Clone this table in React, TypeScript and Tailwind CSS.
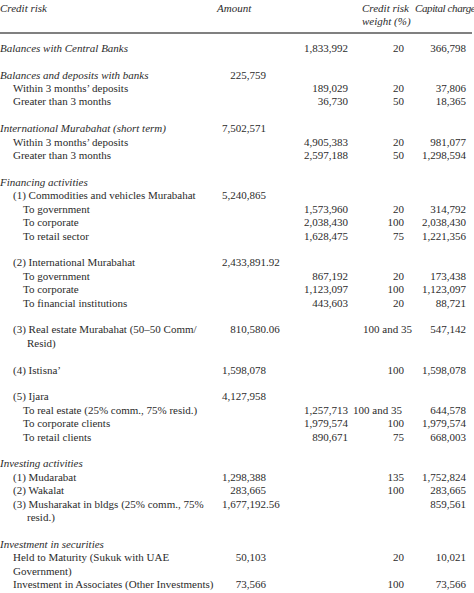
import React from "react";

type Line = {
  label?: string;
  indent?: 0 | 1 | 2 | 3;
  italic?: boolean;
  amount?: string;
  sub?: string;
  weight?: string;
  weightShift?: "right" | "none";
  capital?: string;
} | null;

const lines: Line[] = [
  { label: "Balances with Central Banks", italic: true, sub: "1,833,992", weight: "20", capital: "366,798" },
  null,
  { label: "Balances and deposits with banks", italic: true, amount: "225,759" },
  { label: "Within 3 months\u2019 deposits", indent: 1, sub: "189,029", weight: "20", capital: "37,806" },
  { label: "Greater than 3 months", indent: 1, sub: "36,730", weight: "50", capital: "18,365" },
  null,
  { label: "International Murabahat (short term)", italic: true, amount: "7,502,571" },
  { label: "Within 3 months\u2019 deposits", indent: 1, sub: "4,905,383", weight: "20", capital: "981,077" },
  { label: "Greater than 3 months", indent: 1, sub: "2,597,188", weight: "50", capital: "1,298,594" },
  null,
  { label: "Financing activities", italic: true },
  { label: "(1) Commodities and vehicles Murabahat", indent: 1, amount: "5,240,865" },
  { label: "To government", indent: 2, sub: "1,573,960", weight: "20", capital: "314,792" },
  { label: "To corporate", indent: 2, sub: "2,038,430", weight: "100", capital: "2,038,430" },
  { label: "To retail sector", indent: 2, sub: "1,628,475", weight: "75", capital: "1,221,356" },
  null,
  { label: "(2) International Murabahat", indent: 1, amount: "2,433,891.92" },
  { label: "To government", indent: 2, sub: "867,192", weight: "20", capital: "173,438" },
  { label: "To corporate", indent: 2, sub: "1,123,097", weight: "100", capital: "1,123,097" },
  { label: "To financial institutions", indent: 2, sub: "443,603", weight: "20", capital: "88,721" },
  null,
  { label: "(3) Real estate Murabahat (50\u201350 Comm/", indent: 1, amount: "810,580.06", weight: "100 and 35", weightShift: "right", capital: "547,142" },
  { label: "Resid)", indent: 3 },
  null,
  { label: "(4) Istisna\u2019", indent: 1, amount: "1,598,078", weight: "100", capital: "1,598,078" },
  null,
  { label: "(5) Ijara", indent: 1, amount: "4,127,958" },
  { label: "To real estate (25% comm., 75% resid.)", indent: 2, sub: "1,257,713", weight: "100 and 35", capital: "644,578" },
  { label: "To corporate clients", indent: 2, sub: "1,979,574", weight: "100", capital: "1,979,574" },
  { label: "To retail clients", indent: 2, sub: "890,671", weight: "75", capital: "668,003" },
  null,
  { label: "Investing activities", italic: true },
  { label: "(1) Mudarabat", indent: 1, amount: "1,298,388", weight: "135", capital: "1,752,824" },
  { label: "(2) Wakalat", indent: 1, amount: "283,665", weight: "100", capital: "283,665" },
  { label: "(3) Musharakat in bldgs (25% comm., 75%", indent: 1, amount: "1,677,192.56", capital: "859,561" },
  { label: "resid.)", indent: 3 },
  null,
  { label: "Investment in securities", italic: true },
  { label: "Held to Maturity (Sukuk with UAE", indent: 1, amount: "50,103", weight: "20", capital: "10,021" },
  { label: "Government)", indent: 1 },
  { label: "Investment in Associates (Other Investments)", indent: 1, amount: "73,566", weight: "100", capital: "73,566" },
];

const indentClass = ["pl-0", "pl-[13px]", "pl-[23px]", "pl-[27px]"];

function Amount({ value }: { value?: string }) {
  if (!value) return <div />;
  const [whole, dec] = value.split(".");
  return (
    <div className="flex whitespace-nowrap">
      <span className="w-[48px] text-right">{whole}</span>
      {dec && <span>.{dec}</span>}
    </div>
  );
}

export default function App() {
  return (
    <div className="h-[593px] w-[474px] overflow-hidden bg-white font-['Liberation_Serif',serif] text-[11px] leading-[13.42px] text-[#2b2b2b]">
      <div className="grid grid-cols-[218px_72px_58px_56px_70px] pt-[2px] italic">
        <div>Credit risk</div>
        <div className="-ml-[1px]">Amount</div>
        <div />
        <div className="-mr-4 pl-[14px] whitespace-nowrap">
          Credit risk
          <br />
          weight (%)
        </div>
        <div className="pl-[11px] whitespace-nowrap tracking-[-0.4px]">Capital charge</div>
      </div>
      <div className="mt-[3px] h-[2px] w-[472px] bg-[#808080]" />
      <div className="pt-[8px]">
        {lines.map((line, i) =>
          line === null ? (
            <div key={i} className="h-[13.42px]" />
          ) : (
            <div key={i} className="grid h-[13.42px] grid-cols-[218px_72px_58px_56px_62px]">
              <div className={`whitespace-nowrap ${indentClass[line.indent ?? 0]} ${line.italic ? "italic" : ""}`}>
                {line.label}
              </div>
              <Amount value={line.amount} />
              <div className="text-right">{line.sub}</div>
              <div
                className={`whitespace-nowrap text-right ${
                  line.weightShift === "right" ? "-mr-2" : line.weight === "100 and 35" ? "pr-[2px]" : ""
                }`}
              >
                {line.weight}
              </div>
              <div className="text-right">{line.capital}</div>
            </div>
          )
        )}
      </div>
    </div>
  );
}
